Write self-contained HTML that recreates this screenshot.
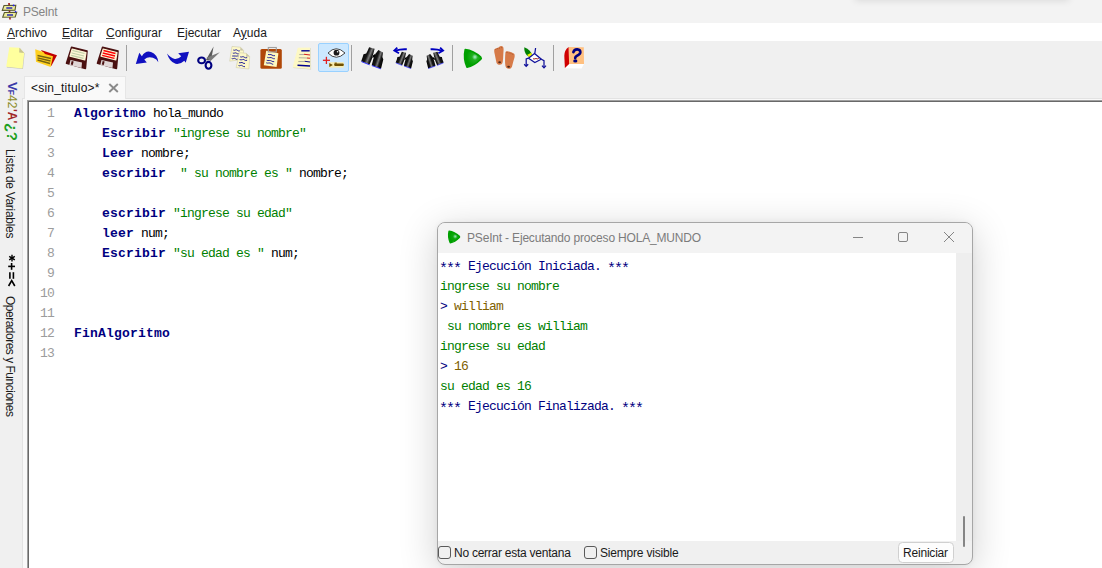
<!DOCTYPE html>
<html><head><meta charset="utf-8">
<style>
*{box-sizing:border-box;margin:0;padding:0}
html,body{width:1102px;height:568px;overflow:hidden;background:#f0f0f0;font-family:"Liberation Sans",sans-serif;font-size:12px;color:#000}
.a{position:absolute}
.t{position:absolute;white-space:pre;line-height:14px}
#title{left:0;top:0;width:1102px;height:23px;background:#f3f3f3}
#menu{left:0;top:23px;width:1102px;height:18px;background:#fff}
#menu span{position:absolute;top:2px;white-space:pre;line-height:16px;color:#1a1a1a}
#menu u{text-decoration:underline;text-decoration-thickness:1px;text-underline-offset:0.5px;text-decoration-color:#444}
.sep{position:absolute;top:45px;width:1px;height:26px;background:#a0a0a0}
.ic{position:absolute;overflow:visible}
#page{left:22px;top:98px;width:1090px;height:480px;background:#f9f9f9;border-left:1px solid #e3e3e3;border-top:1px solid #e3e3e3}
#tab{left:24px;top:76px;width:102px;height:23px;background:#f9f9f9;border:1px solid #e6e6e6;border-bottom:none}
#ed{left:27px;top:100px;width:1090px;height:480px;background:#fff;border-left:1px solid #a0a0a0;border-top:1px solid #a0a0a0}
#ed2{left:28px;top:101px;width:1090px;height:480px;border-left:1px solid #696969;border-top:1px solid #696969}
.cl{position:absolute;white-space:pre;font-family:"Liberation Mono",monospace;font-size:13px;line-height:20px;height:20px}
.ln{color:#9c9c9c;letter-spacing:-0.8px}
.r{letter-spacing:-0.8px}
.b{font-weight:bold;letter-spacing:0.2px;color:#000080}
.k{color:#000}
.s{color:#008000}
.y{color:#806000}
.n{color:#000080}
.st{font-size:15px;letter-spacing:-2px;position:relative;top:2.5px;left:-1px}
.vt{position:absolute;white-space:pre;transform-origin:0 0;transform:rotate(90deg);line-height:14px}
</style></head><body>
<!-- title bar -->
<div id="title" class="a"></div>
<div class="a" style="left:856px;top:-40px;width:212px;height:40px;background:#f3f3f3;box-shadow:0 0 7px 1px rgba(0,0,0,0.10)"></div>
<div class="t" style="left:23px;top:5px;color:#858585;letter-spacing:-0.3px">PSeInt</div>
<!-- menu -->
<div id="menu" class="a">
<span style="left:7px"><u>A</u>rchivo</span>
<span style="left:62px"><u>E</u>ditar</span>
<span style="left:106px"><u>C</u>onfigurar</span>
<span style="left:177px">E<u>j</u>ecutar</span>
<span style="left:233px">A<u>y</u>uda</span>
</div>
<!-- toolbar separators -->
<div class="sep" style="left:126px"></div>
<div class="sep" style="left:351px"></div>
<div class="sep" style="left:452px"></div>
<div class="sep" style="left:553px"></div>
<!-- highlighted button -->
<div class="a" style="left:318px;top:43px;width:31px;height:29px;background:#cce8ff;border:1px solid #99d1ff;border-radius:2px"></div>

<svg class="a" style="left:0;top:0" width="600" height="80" viewBox="0 0 600 80">
<defs>
<linearGradient id="gb" x1="0" y1="0.5" x2="1" y2="0.5" gradientTransform="rotate(28 0.5 0.5)"><stop offset="0" stop-color="#000"/><stop offset="0.42" stop-color="#141414"/><stop offset="0.6" stop-color="#7a7a7a"/><stop offset="0.76" stop-color="#141414"/><stop offset="1" stop-color="#000"/></linearGradient>
<radialGradient id="gp" cx="0.62" cy="0.42" r="0.5"><stop offset="0" stop-color="#b0f0d0"/><stop offset="0.35" stop-color="#20b020"/><stop offset="1" stop-color="#00a000"/></radialGradient>
</defs>
<!-- title icon -->
<g>
<line x1="9" y1="3" x2="10" y2="19.5" stroke="#a01818" stroke-width="1.6"/>
<polygon points="4,5.5 15.8,5.3 15,10.2 2.3,10.4" fill="#ecec9a" stroke="#5a5a30" stroke-width="1.1"/>
<polygon points="4.4,12.5 16.7,12.3 15.2,17 2.7,17.3" fill="#ecec9a" stroke="#5a5a30" stroke-width="1.1"/>
<rect x="6.3" y="7" width="6" height="2" fill="#5a5ab0"/>
<rect x="7" y="14" width="6" height="2" fill="#5a5ab0"/>
<circle cx="13.6" cy="5.4" r="0.9" fill="#2020ff"/>
<circle cx="15.6" cy="11.7" r="0.8" fill="#2020ff"/>
</g>
<!-- new file -->
<polygon points="9.8,48 20,48.3 24.6,53.5 23,69 6.8,67.5" fill="#9a9a8a" opacity="0.5"/>
<polygon points="9.3,47.2 19.4,47.7 24.2,53 22.5,68.5 6.2,66.8" fill="#ffff9e"/>
<polygon points="19.4,47.7 24.2,53 19.2,52.5" fill="#c8c490"/>
<!-- folder -->
<polygon points="41,50 57,55.3 51.3,66 " fill="#c00000"/>
<polygon points="35.2,49.2 43.4,52 45,54 53,56.3 50.7,67 36,61.7" fill="#ffd020"/>
<g stroke="#6a5a10" stroke-width="1.3" opacity="0.9">
<line x1="37.5" y1="55.5" x2="51" y2="58.5"/><line x1="37.5" y1="57.8" x2="50.5" y2="61"/><line x1="37.5" y1="60" x2="50" y2="63.5"/>
</g>
<!-- floppy 1 -->
<g id="fl">
<polygon points="71.6,47.3 87,51 85.4,68.4 66.5,63.3" fill="#4a1010" stroke="#4a1010" stroke-width="1.6" stroke-linejoin="round"/>
<polygon points="72.2,49 86,52.6 84.8,59.8 70,56.2" fill="#fdf5d5" stroke="#fdf5d5" stroke-width="1.2" stroke-linejoin="round"/>
<polygon points="70.5,60 82,62.5 81.5,68 69.3,65" fill="#e0d6d6"/>
<rect x="71.2" y="61.2" width="2" height="3.5" fill="#4a1010" transform="rotate(14 72 63)"/>
</g>
<g stroke="#c0d0a8" stroke-width="1.2">
<line x1="72.5" y1="50.5" x2="84.5" y2="53.5"/><line x1="71.8" y1="53" x2="84" y2="56"/><line x1="71.2" y1="55.3" x2="83.5" y2="58.3"/>
</g>
<use href="#fl" x="31" y="0"/>
<g stroke="#ff0000" stroke-width="1.3">
<line x1="103.5" y1="50.5" x2="115.5" y2="53.5"/><line x1="102.8" y1="53" x2="115" y2="56"/><line x1="102.2" y1="55.3" x2="114.5" y2="58.3"/>
</g>
<!-- undo -->
<path d="M139.3,52.7 L135.8,64 L146.8,62.6 L144.3,59.4 Q149.5,55 156.3,59.6 L158.3,62.2 Q157.6,54.5 151,52 Q145.5,50.3 141.9,56.2 Z" fill="#1010c0"/>
<!-- redo -->
<path d="M167,53.6 Q169.5,62 175.5,63.8 Q180.5,64.6 184.3,60.8 L185.7,62.8 L189,51.8 L178.2,53.2 L181.2,56.2 Q178.5,59.3 174.8,59 Q170.5,58 167,53.6 Z" fill="#1010c0"/>
<!-- scissors -->
<polygon points="205.8,60.2 213.6,46.6 211,60.2" fill="#5a5a5a"/>
<polygon points="206.5,57.8 219.8,52.2 210.5,61" fill="#7a7a7a"/>
<ellipse cx="201.6" cy="60.4" rx="3.4" ry="2.9" fill="none" stroke="#000080" stroke-width="2.1"/>
<ellipse cx="208.5" cy="65.3" rx="2.9" ry="3.4" fill="none" stroke="#000080" stroke-width="2.1"/>
<!-- copy -->
<polygon points="232,46.4 240.5,47.2 243.6,50.4 242.8,59.4 229.7,61.2" fill="#fdf8c8" stroke="#c8c4a0" stroke-width="0.5"/>
<polygon points="240.5,47.2 243.6,50.4 240.2,50.6" fill="#c8c4a8"/>
<g stroke="#1a1a98" stroke-width="0.95" fill="none"><path d="M233.3,50 q1,0.6 2,0 t2,0.3 t2.5,0.6"/><path d="M232.8,53 q1,0.5 2,0 t2,0.4 t2,0.4"/><path d="M232.2,56 l3,0 q1,0.3 2,0 t2,0.3"/><path d="M231.7,58.5 q1,0.5 2,0 t2,0.4 t2,0.3"/></g>
<polygon points="239.3,52.7 246.3,53.3 249.7,56.5 248.9,69 236.1,67.6" fill="#fdf8c8" stroke="#c8c4a0" stroke-width="0.5"/>
<polygon points="246.3,53.3 249.7,56.5 246.1,56.8" fill="#c8c4a8"/>
<g stroke="#1a1a98" stroke-width="0.95" fill="none"><path d="M240.2,56.8 q1,0.5 2,0 t2,0.4 t3,0.5"/><path d="M239.6,59.6 q1.5,0.5 3,0 t2,0.4 t2.5,0.3"/><path d="M239,62.6 q1,0.5 2,0 t2,0.4 t2,0.3"/><path d="M238.5,65.5 q1,0.5 2,0 t2,0.4 t2.5,0.8"/></g>
<!-- paste -->
<rect x="260.4" y="49" width="21.4" height="19.7" rx="1.5" fill="#b04808"/>
<polygon points="266.2,50.7 278.4,53.3 276.6,67 263.8,65.2" fill="#fdf8c0"/>
<rect x="268.3" y="47.5" width="8" height="4.5" fill="none" stroke="#a0a0a0" stroke-width="1.1"/>
<g stroke="#1a1a98" stroke-width="0.95" fill="none"><path d="M268,54.4 q1,0.5 2,0.2 t2,0.5 t3,0.6"/><path d="M267.3,57.3 q1,0.6 2.5,0.3 t2.5,0.5 t2.5,0.6"/><path d="M266.7,60.3 q1.2,0.4 2.5,0.2 t2.5,0.6 t2.5,0.5"/><path d="M266.2,62.8 q1,0.5 2.5,0.2 t2.5,0.5 t2,0.8"/></g>
<!-- document -->
<polygon points="298.3,48.3 310.8,48 311.1,69.5 293.1,68.1" fill="#b0b0a0" opacity="0.5"/>
<polygon points="297.8,47.8 310.3,47.5 310.6,69 292.6,67.6" fill="#fdf8c4"/>
<g stroke-width="1.1">
<line x1="301.3" y1="50.8" x2="309.7" y2="50.8" stroke="#000090" stroke-width="1.4"/>
<line x1="299.3" y1="54.5" x2="304" y2="54.5" stroke="#b0b0a0"/><line x1="304" y1="54.3" x2="310" y2="55" stroke="#d02020"/>
<line x1="298.8" y1="57.8" x2="307" y2="58" stroke="#b0b0a0"/><line x1="307" y1="58" x2="310" y2="58.3" stroke="#d02020"/>
<line x1="298.3" y1="61.5" x2="304" y2="61.5" stroke="#b0b0a0"/><line x1="304.5" y1="61.3" x2="310" y2="62" stroke="#101090"/>
<line x1="297.5" y1="65.3" x2="310" y2="66" stroke="#000090" stroke-width="1.4"/>
</g>
<!-- eye button -->
<path d="M328,53 Q336.2,44.5 345,53 Q336.2,61.5 328,53 Z" fill="#fff" stroke="#303030" stroke-width="0.9"/>
<circle cx="336.5" cy="52.7" r="2.9" fill="#1a1a1a"/>
<circle cx="337.6" cy="51.8" r="0.8" fill="#fff"/>
<g stroke="#e02020" stroke-width="1.3"><line x1="322.9" y1="60.3" x2="330" y2="60.3"/><line x1="326.4" y1="56.8" x2="326.4" y2="64"/></g>
<rect x="328.9" y="62.2" width="14.9" height="5.4" fill="#f8ecb0"/>
<polygon points="329.3,62.9 332.9,64.9 329.3,66.9" fill="#705000"/>
<rect x="334.3" y="63.4" width="9.4" height="2.6" rx="0.8" fill="#705000"/><rect x="334.6" y="62.6" width="2.2" height="1.2" fill="#705000"/>
<!-- binoculars -->
<g id="bino">
<polygon points="369.1,47.2 374.6,48.7 373.4,53.6 372.8,55.4 372,58.8 369.6,64.6 361.2,61.2 362.7,57.1 363.5,54.2 366.2,53.6 367.6,50.7" fill="url(#gb)"/>
<polygon points="378.4,50.1 383,52.5 382.4,57.1 383.3,59.4 381,68.7 371.7,65.2 373.4,58.8 375.7,53.6" fill="url(#gb)"/>
<polygon points="372.8,55.4 375.7,53.6 374.8,57 372.3,58" fill="#000"/>
<line x1="361.4" y1="61.6" x2="369.5" y2="64.8" stroke="#2020ff" stroke-width="0.9"/>
<line x1="371.9" y1="65.6" x2="380.8" y2="68.8" stroke="#2020ff" stroke-width="0.9"/>
</g>
<!-- bino prev -->
<g transform="translate(395.5,51.5) scale(0.78) translate(-361,-47)">
<use href="#bino"/>
</g>
<path d="M406.8,49.2 Q401,48.8 395.5,50.6" fill="none" stroke="#0000c0" stroke-width="2"/>
<polyline points="397.3,47.6 394.3,50.5 399,53.2" fill="none" stroke="#0000c0" stroke-width="1.8"/>
<!-- bino next (mirror) -->
<g transform="translate(443.8,51.5) scale(-0.78,0.78) translate(-361,-47)">
<use href="#bino"/>
</g>
<path d="M430.6,49.2 Q436.4,48.8 442,50.6" fill="none" stroke="#0000c0" stroke-width="2"/>
<polyline points="440.1,47.6 443.1,50.5 438.4,53.2" fill="none" stroke="#0000c0" stroke-width="1.8"/>
<!-- play -->
<path d="M465.2,49.6 Q473.5,50.6 480.8,57.2 Q481.8,58.3 480.8,59.3 Q474,66 467,67.2 Q463.2,58.5 465.2,49.6 Z" fill="url(#gp)" stroke="#00a000" stroke-width="1.6" stroke-linejoin="round"/>
<!-- feet -->
<path d="M494.2,49.6 Q496,47.8 498.5,47.4 Q500.5,45.6 502.4,46.2 Q503.8,47 503.6,49.5 Q503.3,54 503.1,58.5 Q502.9,62.5 502,64 Q500,65.4 497.6,64.2 Q496.2,63 496,60.5 Q495.3,57 494.8,54.5 Q494,51.5 494.2,49.6 Z" fill="#d67a48"/>
<path d="M505.4,52.6 Q505.8,50.8 507.3,51.2 Q511.5,52.2 514.2,53.8 Q515,55 514.5,57.5 Q513.4,61 512.8,63.5 Q512.3,67.3 510.6,68.5 Q508,69.3 506.2,67.8 Q505.2,66.3 505.1,63 Q505,58 505.2,55.5 Z" fill="#d67a48"/>
<g fill="#a85830" opacity="0.75"><circle cx="495.8" cy="49.3" r="0.6"/><circle cx="497.6" cy="48.6" r="0.6"/><circle cx="499.4" cy="48.2" r="0.6"/><circle cx="501.5" cy="47.6" r="0.7"/>
<circle cx="507" cy="52.4" r="0.7"/><circle cx="509.2" cy="53" r="0.6"/><circle cx="511" cy="53.6" r="0.6"/><circle cx="512.8" cy="54.3" r="0.6"/></g>
<ellipse cx="499.6" cy="62.3" rx="1.4" ry="1" fill="#502818"/>
<ellipse cx="508.6" cy="66.7" rx="1.4" ry="1" fill="#502818"/>
<!-- flowchart -->
<path d="M524.3,47.2 Q531,49.5 532.5,56.2 Q529.5,57.5 527,55.5 Q524,52 524.3,47.2 Z" fill="#008000"/>
<path d="M527,55 L531.2,52.8 L532.6,56.6 L530.2,57.6 Z" fill="#f0f000"/><line x1="531.2" y1="57" x2="533.2" y2="58.6" stroke="#503010" stroke-width="1"/>
<g fill="none" stroke="#10109a" stroke-width="1.25">
<line x1="535.6" y1="48" x2="534.8" y2="53.5"/>
<polygon points="534.5,53.6 541.3,59.2 534.8,62.5 528.5,58.2" fill="#fff"/>
<polyline points="528.5,58.2 526.2,59 526.2,66"/>
<polyline points="524.2,64.2 526.2,66.3 528.2,64.2"/>
<polyline points="541.3,59.2 544,60.6 544,67.8"/>
<polyline points="542,65.7 544,67.9 546,65.7"/>
</g>
<path d="M533,58.6 q1,0.8 2,0.2 t2,0 t1.8,-0.6" fill="none" stroke="#a02828" stroke-width="1"/>
<!-- help -->
<polygon points="568.8,47.1 583.8,47.3 584,64 569.1,64" fill="#ffc080"/>
<polygon points="569.1,64 584,64 581.5,68.5 565,68.3" fill="#fff"/>
<path d="M568.6,47.1 Q564.2,50.5 564.3,56 L564.9,67.9 L569.1,64 Z" fill="#d00000"/>
<path d="M573.4,52.2 Q574.2,49.2 577.2,49.3 Q580.6,49.6 580.3,52.4 Q580,54.6 577,55.7 Q575.2,56.4 575.2,58" fill="none" stroke="#000080" stroke-width="2.7" stroke-linecap="round"/><ellipse cx="575.3" cy="60.9" rx="2.1" ry="1.6" fill="#000080"/>
</svg>

<!-- notebook -->
<div id="page" class="a"></div>
<div id="tab" class="a"></div>
<div class="t" style="left:31px;top:81px;color:#111;letter-spacing:0.2px">&lt;sin_titulo&gt;*</div>
<svg class="a" style="left:108px;top:83px" width="12" height="10" viewBox="0 0 12 10"><g stroke="#8a8a8a" stroke-width="1.9"><line x1="1.3" y1="1" x2="9.8" y2="9"/><line x1="9.8" y1="1" x2="1.3" y2="9"/></g></svg>
<div id="ed" class="a"></div>
<div id="ed2" class="a"></div>

<!-- code -->
<div class="a" style="left:0;top:104px;width:1102px;height:466px">
<div class="cl ln" style="top:0px;left:47px">1</div>
<div class="cl b" style="top:0px;left:74px">Algoritmo</div>
<div class="cl k r" style="top:0px;left:146px"> hola_mundo</div>
<div class="cl ln" style="top:20px;left:47px">2</div>
<div class="cl b" style="top:20px;left:102px">Escribir</div>
<div class="cl s r" style="top:20px;left:173px">&quot;ingrese su nombre&quot;</div>
<div class="cl ln" style="top:40px;left:47px">3</div>
<div class="cl b" style="top:40px;left:102px">Leer</div>
<div class="cl k r" style="top:40px;left:134px"> nombre;</div>
<div class="cl ln" style="top:60px;left:47px">4</div>
<div class="cl b" style="top:60px;left:102px">escribir</div>
<div class="cl s r" style="top:60px;left:180px">&quot; su nombre es &quot;</div>
<div class="cl k r" style="top:60px;left:292px"> nombre;</div>
<div class="cl ln" style="top:80px;left:47px">5</div>
<div class="cl ln" style="top:100px;left:47px">6</div>
<div class="cl b" style="top:100px;left:102px">escribir</div>
<div class="cl s r" style="top:100px;left:173px">&quot;ingrese su edad&quot;</div>
<div class="cl ln" style="top:120px;left:47px">7</div>
<div class="cl b" style="top:120px;left:102px">leer</div>
<div class="cl k r" style="top:120px;left:134px"> num;</div>
<div class="cl ln" style="top:140px;left:47px">8</div>
<div class="cl b" style="top:140px;left:102px">Escribir</div>
<div class="cl s r" style="top:140px;left:173px">&quot;su edad es &quot;</div>
<div class="cl k r" style="top:140px;left:264px"> num;</div>
<div class="cl ln" style="top:160px;left:47px">9</div>
<div class="cl ln" style="top:180px;left:40px">10</div>
<div class="cl ln" style="top:200px;left:40px">11</div>
<div class="cl ln" style="top:220px;left:40px">12</div>
<div class="cl b" style="top:220px;left:74px">FinAlgoritmo</div>
<div class="cl ln" style="top:240px;left:40px">13</div>
</div>

<!-- side panel -->
<div class="vt" style="left:19px;top:82px;font-size:13px;font-weight:bold;color:#3a3aa8;letter-spacing:-1px">V<span style="font-size:8.5px;letter-spacing:0">F</span></div>
<div class="vt" style="left:19px;top:95px;font-size:12px;color:#8c8c28">42</div>
<div class="vt" style="left:19px;top:109px;font-size:12px;font-weight:bold;color:#a02828">'A'</div>
<div class="vt" style="left:19px;top:123px;font-size:15px;font-weight:bold;color:#20a020;letter-spacing:-0.5px">¿?</div>
<div class="vt" style="left:17px;top:149px;color:#1a1a1a;letter-spacing:-0.3px">Lista de Variables</div>
<svg class="a" style="left:0;top:250px" width="22" height="40" viewBox="0 250 22 40"><g stroke="#000" stroke-width="1.6" fill="none">
<line x1="12" y1="254.8" x2="12" y2="261.4" stroke-width="1.4"/><line x1="9.2" y1="256.4" x2="14.8" y2="259.8" stroke-width="1.4"/><line x1="9.2" y1="259.8" x2="14.8" y2="256.4" stroke-width="1.4"/>
<line x1="8.2" y1="266.4" x2="15" y2="266.4"/><line x1="11.6" y1="263" x2="11.6" y2="269.8"/>
<line x1="9.9" y1="272.2" x2="9.9" y2="278.8"/><line x1="13.4" y1="272.2" x2="13.4" y2="278.8"/>
<polyline points="8.6,286 11.7,280.6 14.8,286"/>
</g></svg>
<div class="vt" style="left:17px;top:296px;color:#1a1a1a;letter-spacing:-0.5px">Operadores y Funciones</div>


<!-- console window -->
<div id="win" class="a" style="left:437px;top:222px;width:536px;height:343px;background:#f0f0f0;border:1px solid #a6a6a6;border-radius:8px;box-shadow:0 8px 38px rgba(0,0,0,0.19),0 0 5px rgba(0,0,0,0.05)"></div>
<div class="a" style="left:438px;top:223px;width:534px;height:30px;background:#f3f3f3;border-radius:7px 7px 0 0"></div>
<div class="a" style="left:438px;top:253px;width:518px;height:288px;background:#fff"></div>
<div class="a" style="left:956px;top:253px;width:16px;height:288px;background:#eeeeee"></div>

<div class="a" style="left:963px;top:516px;width:2px;height:31px;background:#858585;border-radius:1px"></div>
<svg class="a" style="left:437px;top:222px" width="536" height="342" viewBox="437 222 536 342">
<defs><radialGradient id="gp2" cx="0.6" cy="0.45" r="0.5"><stop offset="0" stop-color="#a0e8c0"/><stop offset="0.4" stop-color="#10a810"/><stop offset="1" stop-color="#00a000"/></radialGradient></defs>
<path transform="translate(142,198.5) scale(0.66)" d="M465.2,49.6 Q473.5,50.6 480.8,57.2 Q481.8,58.3 480.8,59.3 Q474,66 467,67.2 Q463.2,58.5 465.2,49.6 Z" fill="url(#gp2)" stroke="#00a000" stroke-width="2" stroke-linejoin="round"/>
<line x1="853" y1="237.5" x2="863" y2="237.5" stroke="#858585" stroke-width="1"/>
<rect x="898.5" y="232.5" width="9" height="9" rx="1.5" fill="none" stroke="#858585" stroke-width="1"/>
<g stroke="#858585" stroke-width="1"><line x1="944" y1="232" x2="954" y2="242"/><line x1="954" y1="232" x2="944" y2="242"/></g>
<rect x="438.5" y="546.5" width="12" height="12" rx="2.5" fill="none" stroke="#5a5a5a" stroke-width="1"/>
<rect x="584.5" y="546.5" width="12" height="12" rx="2.5" fill="none" stroke="#5a5a5a" stroke-width="1"/>
<rect x="898.5" y="542.5" width="55" height="20" rx="4" fill="#fdfdfd" stroke="#d0d0d0" stroke-width="1"/>
</svg>
<div class="t" style="left:454px;top:546px;color:#1a1a1a;letter-spacing:-0.25px">No cerrar esta ventana</div>
<div class="t" style="left:600px;top:546px;color:#1a1a1a;letter-spacing:-0.2px">Siempre visible</div>
<div class="t" style="left:903px;top:546px;color:#1a1a1a;letter-spacing:-0.2px">Reiniciar</div>
<div class="t" style="left:467px;top:231px;color:#7c7c7c;letter-spacing:-0.18px">PSeInt - Ejecutando proceso HOLA_MUNDO</div>
<div class="a" style="left:440px;top:257px;width:510px;height:280px">
<div class="cl r n" style="top:0px;left:0px"><span class="st">***</span> Ejecución Iniciada. <span class="st">***</span></div>
<div class="cl r s" style="top:20px;left:0px">ingrese su nombre</div>
<div class="cl r n" style="top:40px;left:0px">&gt;</div>
<div class="cl r y" style="top:40px;left:7px"> william</div>
<div class="cl r s" style="top:60px;left:0px"> su nombre es william</div>
<div class="cl r s" style="top:80px;left:0px">ingrese su edad</div>
<div class="cl r n" style="top:100px;left:0px">&gt;</div>
<div class="cl r y" style="top:100px;left:7px"> 16</div>
<div class="cl r s" style="top:120px;left:0px">su edad es 16</div>
<div class="cl r n" style="top:140px;left:0px"><span class="st">***</span> Ejecución Finalizada. <span class="st">***</span></div>
</div>

</body></html>
